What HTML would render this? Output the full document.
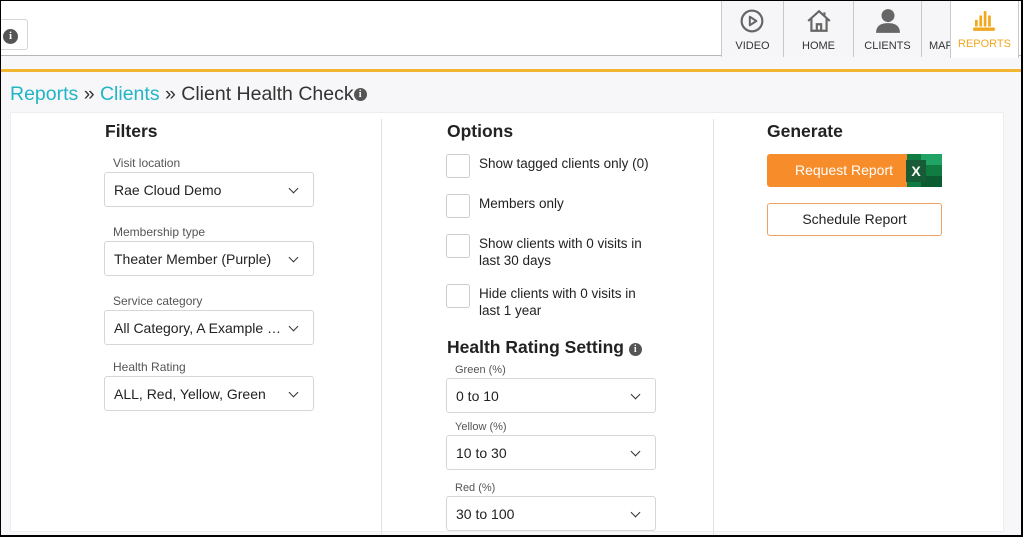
<!DOCTYPE html>
<html><head><style>
*{box-sizing:border-box;margin:0;padding:0}
body{width:1023px;height:537px;overflow:hidden;background:#f7f7f9;font-family:"Liberation Sans",sans-serif;position:relative;color:#222}
.a{position:absolute}
.frame{position:absolute;left:0;top:0;width:1023px;height:537px;border:1px solid #000;border-width:1px 2px 2px 1px;pointer-events:none;z-index:10}
.tab{position:absolute;top:0;height:57px;background:#f6f6f8;border-left:1px solid #c8c8cc;text-align:center;font-size:11px;color:#333}
.tab span{position:absolute;left:0;right:0;top:40px}
.sel{position:absolute;width:210px;height:35px;background:#fff;border:1px solid #d6d6d6;border-radius:3px;font-size:14px;padding:9px 9px;white-space:nowrap;overflow:hidden;color:#222}
.sel:after{content:"";position:absolute;right:16px;top:12px;width:6px;height:6px;border-right:1.3px solid #333;border-bottom:1.3px solid #333;transform:rotate(45deg)}
.lbl{position:absolute;font-size:12px;color:#555}
.cb{position:absolute;width:24px;height:24px;border:1px solid #ccc;border-radius:3px;background:#fff}
.ot{position:absolute;font-size:13.5px;color:#222;line-height:17px}
h2{position:absolute;font-size:17.5px;font-weight:bold;color:#222}
.info{display:inline-block;width:13px;height:13px;border-radius:50%;background:#555;color:#fff;font-size:10px;font-weight:bold;text-align:center;line-height:13px;font-family:"Liberation Serif",serif;vertical-align:1px}
</style></head><body>
<div class="a" style="left:0;top:0;width:1023px;height:56px;background:#fff;border-bottom:1px solid #b5b5ba"></div>
<div class="a" style="left:-4px;top:19px;width:32px;height:31px;border:1px solid #d6d6d6;border-radius:3px;background:#fff"></div>
<div class="a" style="left:3px;top:27px"><span class="info" style="width:15px;height:15px;line-height:15px;font-size:11px">i</span></div>
<div class="tab" style="left:721px;width:62px"><svg class="a" style="left:18px;top:9px" width="24" height="24" viewBox="0 0 22 22"><circle cx="11" cy="11" r="9.5" fill="none" stroke="#666" stroke-width="2"/><path d="M9 7v8l6-4z" fill="none" stroke="#666" stroke-width="1.8" stroke-linejoin="round"/></svg><span>VIDEO</span></div>
<div class="tab" style="left:783px;width:70px"><svg class="a" style="left:22px;top:8px" width="26" height="26" viewBox="0 0 24 24"><path d="M2 12L12 3l10 9M5 10v11h14V10M10 21v-6h4v6M17 4v4" fill="none" stroke="#666" stroke-width="2"/></svg><span>HOME</span></div>
<div class="tab" style="left:853px;width:68px"><svg class="a" style="left:22px;top:8px" width="24" height="26" viewBox="0 0 22 24"><circle cx="11" cy="7" r="6" fill="#666"/><path d="M0 23c0-7 5-9 11-9s11 2 11 9z" fill="#666"/></svg><span>CLIENTS</span></div>
<div class="tab" style="left:921px;width:29px;overflow:hidden"><span style="left:7px;text-align:left">MAP</span></div>
<div class="a" style="left:950px;top:0;width:69px;height:58px;background:#fff;border-left:1px solid #c8c8cc;border-right:1px solid #c8c8cc"></div>
<svg class="a" style="left:972px;top:10px" width="24" height="22" viewBox="0 0 22 20"><path d="M4 15V9M8 15V5M12 15V1M16 15V5" stroke="#f0a81e" stroke-width="2.5"/><rect x="1" y="16" width="20" height="3" rx="1" fill="#f0a81e"/></svg>
<div class="a" style="left:950px;top:38px;width:69px;text-align:center;font-size:11px;color:#f0a81e">REPORTS</div>
<div class="a" style="left:0;top:69px;width:1023px;height:3px;background:#f2b632"></div>
<div class="a" style="left:10px;top:83px;font-size:19.5px;color:#333;white-space:nowrap"><span style="color:#22b5c6">Reports</span> » <span style="color:#22b5c6">Clients</span> » Client Health Check<span class="info" style="vertical-align:3px">i</span></div>
<div class="a" style="left:10px;top:112px;width:994px;height:420px;background:#fff;border:1px solid #eee"></div>
<div class="a" style="left:381px;top:119px;width:1px;height:418px;background:#e2e2e2"></div>
<div class="a" style="left:713px;top:119px;width:1px;height:418px;background:#e2e2e2"></div>
<h2 style="left:105px;top:121px">Filters</h2>
<div class="lbl" style="left:113px;top:156px">Visit location</div>
<div class="sel" style="left:104px;top:172px">Rae Cloud Demo</div>
<div class="lbl" style="left:113px;top:225px">Membership type</div>
<div class="sel" style="left:104px;top:241px">Theater Member (Purple)</div>
<div class="lbl" style="left:113px;top:294px">Service category</div>
<div class="sel" style="left:104px;top:310px;padding-right:30px;text-overflow:ellipsis">All Category, A Example E...</div>
<div class="lbl" style="left:113px;top:360px">Health Rating</div>
<div class="sel" style="left:104px;top:376px">ALL, Red, Yellow, Green</div>
<h2 style="left:447px;top:121px">Options</h2>
<div class="cb" style="left:446px;top:154px"></div><div class="ot" style="left:479px;top:155px">Show tagged clients only (0)</div>
<div class="cb" style="left:446px;top:194px"></div><div class="ot" style="left:479px;top:195px">Members only</div>
<div class="cb" style="left:446px;top:234px"></div><div class="ot" style="left:479px;top:235px">Show clients with 0 visits in<br>last 30 days</div>
<div class="cb" style="left:446px;top:284px"></div><div class="ot" style="left:479px;top:285px">Hide clients with 0 visits in<br>last 1 year</div>
<h2 style="left:447px;top:337px">Health Rating Setting <span class="info">i</span></h2>
<div class="lbl" style="left:455px;top:364px;font-size:11px">Green (%)</div>
<div class="sel" style="left:446px;top:378px">0 to 10</div>
<div class="lbl" style="left:455px;top:421px;font-size:11px">Yellow (%)</div>
<div class="sel" style="left:446px;top:435px">10 to 30</div>
<div class="lbl" style="left:455px;top:482px;font-size:11px">Red (%)</div>
<div class="sel" style="left:446px;top:496px">30 to 100</div>
<h2 style="left:767px;top:121px">Generate</h2>
<div class="a" style="left:767px;top:154px;width:140px;height:33px;background:#f78c2a;border-radius:3px 0 0 3px;color:#fff;font-size:14px;text-align:center;line-height:33px;padding-left:14px">Request Report</div>
<div class="a" style="left:907px;top:154px;width:35px;height:33px;background:#107c41"></div>
<div class="a" style="left:921px;top:154px;width:21px;height:11px;background:#21a366"></div>
<div class="a" style="left:921px;top:176px;width:21px;height:11px;background:#0b5c30"></div>
<div class="a" style="left:906px;top:160px;width:20px;height:22px;background:#185c37;color:#fff;font-weight:bold;font-size:14px;text-align:center;line-height:22px">X</div>
<div class="a" style="left:767px;top:203px;width:175px;height:33px;border:1px solid #f0a060;border-radius:3px;background:#fff;text-align:center;line-height:31px;font-size:14px;color:#222">Schedule Report</div>
<div class="frame"></div>
</body></html>
